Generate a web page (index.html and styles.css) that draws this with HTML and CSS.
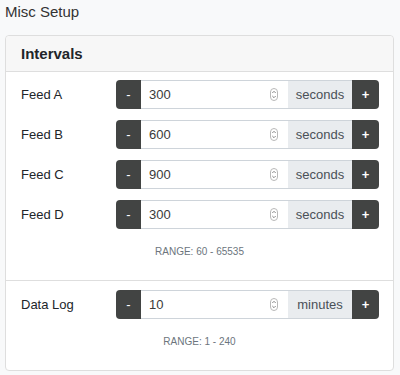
FILE: index.html
```html
<!DOCTYPE html>
<html lang="en">
<head>
    <meta charset="UTF-8">
    <meta name="viewport" content="width=device-width, initial-scale=1.0">
    <title>Misc Setup</title>
    <link rel="stylesheet" href="styles.css">
</head>
<body>
    <h1 class="page-title">Misc Setup</h1>

    <div class="setup-card">
        <div class="setup-card-header">Intervals</div>

        <div class="setup-section">
            <div class="setup-row">
                <label class="setup-label">Feed A</label>
                <div class="stepper">
                    <button class="stepper-btn minus">-</button>
                    <div class="stepper-input"><span>300</span><svg class="spin" width="8" height="13" viewBox="0 0 8 13"><rect x="0.5" y="0.5" width="7" height="12" rx="3.5" fill="none" stroke="#b8b8b8"/><path d="M2.3 5 L4 3.3 L5.7 5 M2.3 8 L4 9.7 L5.7 8" fill="none" stroke="#777" stroke-width="0.9"/></svg></div>
                    <span class="stepper-unit">seconds</span>
                    <button class="stepper-btn plus">+</button>
                </div>
            </div>
            <div class="setup-row">
                <label class="setup-label">Feed B</label>
                <div class="stepper">
                    <button class="stepper-btn minus">-</button>
                    <div class="stepper-input"><span>600</span><svg class="spin" width="8" height="13" viewBox="0 0 8 13"><rect x="0.5" y="0.5" width="7" height="12" rx="3.5" fill="none" stroke="#b8b8b8"/><path d="M2.3 5 L4 3.3 L5.7 5 M2.3 8 L4 9.7 L5.7 8" fill="none" stroke="#777" stroke-width="0.9"/></svg></div>
                    <span class="stepper-unit">seconds</span>
                    <button class="stepper-btn plus">+</button>
                </div>
            </div>
            <div class="setup-row">
                <label class="setup-label">Feed C</label>
                <div class="stepper">
                    <button class="stepper-btn minus">-</button>
                    <div class="stepper-input"><span>900</span><svg class="spin" width="8" height="13" viewBox="0 0 8 13"><rect x="0.5" y="0.5" width="7" height="12" rx="3.5" fill="none" stroke="#b8b8b8"/><path d="M2.3 5 L4 3.3 L5.7 5 M2.3 8 L4 9.7 L5.7 8" fill="none" stroke="#777" stroke-width="0.9"/></svg></div>
                    <span class="stepper-unit">seconds</span>
                    <button class="stepper-btn plus">+</button>
                </div>
            </div>
            <div class="setup-row">
                <label class="setup-label">Feed D</label>
                <div class="stepper">
                    <button class="stepper-btn minus">-</button>
                    <div class="stepper-input"><span>300</span><svg class="spin" width="8" height="13" viewBox="0 0 8 13"><rect x="0.5" y="0.5" width="7" height="12" rx="3.5" fill="none" stroke="#b8b8b8"/><path d="M2.3 5 L4 3.3 L5.7 5 M2.3 8 L4 9.7 L5.7 8" fill="none" stroke="#777" stroke-width="0.9"/></svg></div>
                    <span class="stepper-unit">seconds</span>
                    <button class="stepper-btn plus">+</button>
                </div>
            </div>
            <p class="range-note">RANGE: 60 - 65535</p>
        </div>

        <div class="setup-section bordered">
            <div class="setup-row">
                <label class="setup-label">Data Log</label>
                <div class="stepper">
                    <button class="stepper-btn minus">-</button>
                    <div class="stepper-input"><span>10</span><svg class="spin" width="8" height="13" viewBox="0 0 8 13"><rect x="0.5" y="0.5" width="7" height="12" rx="3.5" fill="none" stroke="#b8b8b8"/><path d="M2.3 5 L4 3.3 L5.7 5 M2.3 8 L4 9.7 L5.7 8" fill="none" stroke="#777" stroke-width="0.9"/></svg></div>
                    <span class="stepper-unit">minutes</span>
                    <button class="stepper-btn plus">+</button>
                </div>
            </div>
            <p class="range-note">RANGE: 1 - 240</p>
        </div>
    </div>
</body>
</html>
```

FILE: styles.css
```css
* {
    margin: 0;
    padding: 0;
    box-sizing: border-box;
    font-family: 'Liberation Sans', Arial, sans-serif;
}

body {
    background: #f8f9fa;
    color: #212529;
    padding: 0 6px 0 5px;
}

.page-title {
    font-size: 15px;
    font-weight: normal;
    line-height: 24px;
    color: #333;
}

.setup-card {
    margin-top: 11px;
    background: #fff;
    border: 1px solid #dedede;
    border-radius: 4px;
}

.setup-card-header {
    height: 36px;
    padding-left: 15px;
    display: flex;
    align-items: center;
    font-size: 15px;
    font-weight: bold;
    background: #f7f7f7;
    border-bottom: 1px solid #dedede;
    border-radius: 4px 4px 0 0;
}

.setup-section {
    padding: 8px 14px 21px 15px;
    display: flex;
    flex-direction: column;
    gap: 11px;
}

.setup-section.bordered {
    border-top: 1px solid #dedede;
    padding-top: 9px;
}

.setup-row {
    display: flex;
    align-items: center;
}

.setup-label {
    width: 95px;
    font-size: 13px;
}

.stepper {
    flex: 1;
    display: flex;
    height: 29px;
}

.stepper-btn {
    border: none;
    background: #424443;
    color: #fff;
    font-size: 13px;
}

.stepper-btn.minus {
    width: 25px;
    border-radius: 4px 0 0 4px;
}

.stepper-btn.plus {
    width: 27px;
    font-weight: bold;
    border-radius: 0 4px 4px 0;
}

.stepper-input {
    flex: 1;
    display: flex;
    align-items: center;
    justify-content: space-between;
    padding: 0 10px 0 8px;
    border-top: 1px solid #ced4da;
    border-bottom: 1px solid #ced4da;
    font-size: 13px;
    color: #3a3a3a;
}

.spin {
    display: block;
}

.stepper-unit {
    width: 64px;
    display: flex;
    align-items: center;
    justify-content: center;
    background: #e9ecef;
    border-top: 1px solid #ced4da;
    border-bottom: 1px solid #ced4da;
    font-size: 13px;
    color: #495057;
}

.range-note {
    margin-top: 5px;
    text-align: center;
    font-size: 10px;
    line-height: 14px;
    color: #6c757d;
    margin-left: -15px;
    margin-right: -14px;
}
```
